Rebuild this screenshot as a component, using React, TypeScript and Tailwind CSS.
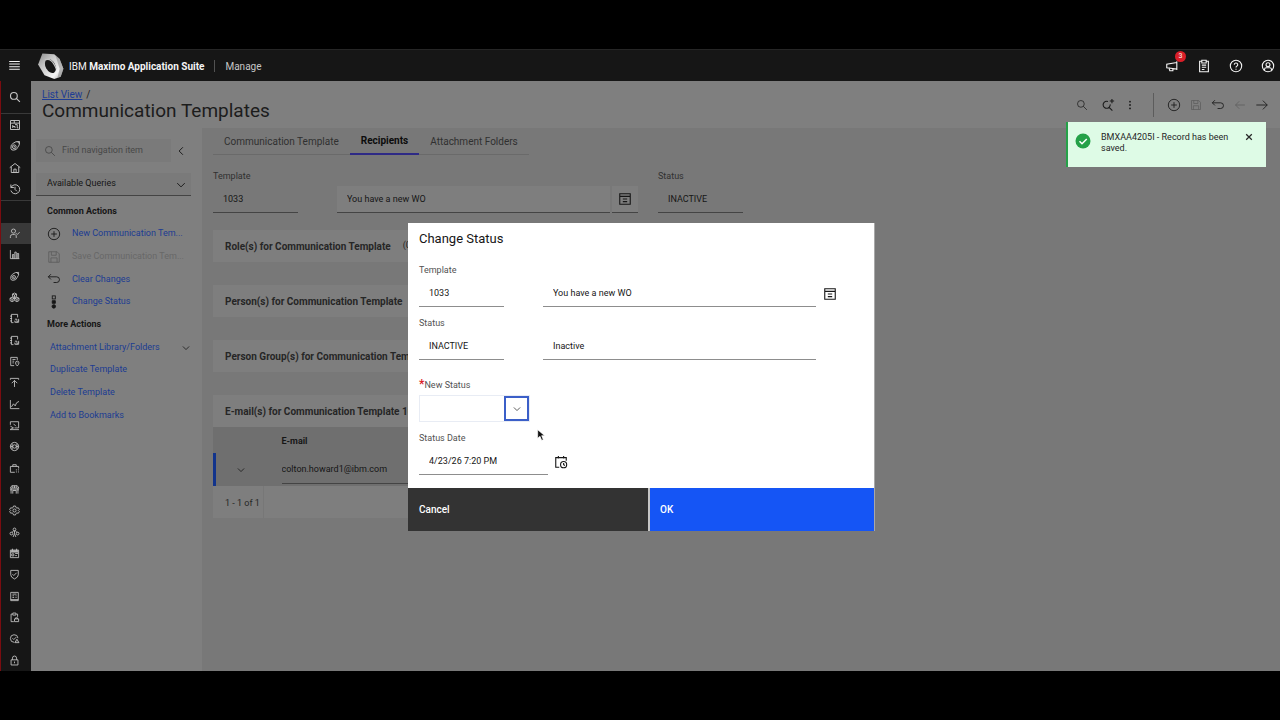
import type { ReactNode } from "react";

const glyphs: Record<string, ReactNode> = {
  menu: <path d="M3 6h26M3 12.500h26M3 19h26M3 25.500h26" />,
  search: <path d="M13 4a9 9 0 1 0 0 18a9 9 0 0 0 0-18zM19.500 19.500L29 29" />,
  searchPlus: <path d="M16 8.200A8 8 0 1 0 20.500 18A8 8 0 0 0 21 14.500M18 21l8 8M25 2v10M20 7h10" />,
  overflow: (
    <g fill="currentColor" stroke="none">
      <circle cx="16" cy="7" r="2.500" />
      <circle cx="16" cy="16" r="2.500" />
      <circle cx="16" cy="25" r="2.500" />
    </g>
  ),
  add: <path d="M16 3a13 13 0 1 0 0 26a13 13 0 0 0 0-26zM16 9.500v13M9.500 16h13" />,
  save: <path d="M4 4h19l5 5v19H4zM10 4v8h11V4M9 28V18h14v10" />,
  undo: <path d="M9 5L3 11l6 6M3 11h19a6.500 6.500 0 0 1 0 13H15" />,
  left: <path d="M14 6L4 16l10 10M4 16h25" />,
  right: <path d="M18 6l10 10L18 26M28 16H3" />,
  chevronDown: <path d="M6 11l10 10l10-10" />,
  chevronLeft: <path d="M21 6L11 16l10 10" />,
  close: <path d="M7 7l18 18M25 7L7 25" />,
  status: (
    <>
      <rect x="12" y="2" width="7" height="7" />
      <path d="M12 13h7v6h-7z" fill="currentColor" />
      <circle cx="15.500" cy="26" r="4" fill="currentColor" />
    </>
  ),
  megaphone: <path d="M27 5v20M27 8L4 12v8l23 3M9 20l2 7h7v-5" />,
  clipboard: <path d="M10 5H6v24h20V5h-4M11 3h10v6H11zM11 14h10M11 19h10M11 24h6" />,
  help: (
    <>
      <circle cx="16" cy="16" r="13" />
      <path d="M12 13a4 4 0 1 1 5.500 3.700Q16 17.500 16 19.500M16 22v2.500" />
    </>
  ),
  user: (
    <>
      <circle cx="16" cy="16" r="13" />
      <circle cx="16" cy="13" r="4.500" />
      <path d="M8 26v-2a4 4 0 0 1 4-4h8a4 4 0 0 1 4 4v2" />
    </>
  ),
  dashboard: <path d="M4 4h24v24H4zM4 11h24M14 4v7M10 16v8M10 20h6v4M16 15h6v4M22 19v5M22 24h3" />,
  rocket: (
    <>
      <path d="M28 4Q17 3 11 9Q4 12 5 22Q6 28 12 27Q21 27 23 20Q29 14 28 4zM22 4l6 6" />
      <circle cx="14" cy="18" r="5" />
      <circle cx="14" cy="18" r="1" />
    </>
  ),
  home: <path d="M2 15L16 4l14 11M6 13v15h20V13M13 28v-9h6v9" />,
  history: <path d="M5 4v8h8M5.500 12A12 12 0 1 1 5 20M16 10v7l5 5" />,
  userCheck: (
    <>
      <circle cx="13" cy="9" r="6" />
      <path d="M4 29v-4a6 6 0 0 1 6-6h6a6 6 0 0 1 5 3v7M20 15l4 4l7-7" />
    </>
  ),
  bars: <path d="M4 3v25h26M10 28V16h4v12M17 28V9h4v19M24 28V13h4v15" />,
  cubes: (
    <path d="M16 3l6 3v7l-6 3l-6-3V6zM9 15l6 3v7l-6 3l-6-3v-7zM23 15l6 3v7l-6 3l-6-3v-7zM10 6l6 3l6-3M16 9v7M3 18l6 3l6-3l2 0l6 3l6-3M9 21v7M23 21v7" />
  ),
  notebook: (
    <>
      <path d="M13 28H7V4h18v9M3 9h6M3 16h6M3 23h6" />
      <path d="M17 18h6v5M28 17v10H17v-5M20 24l3 3l5-5" />
    </>
  ),
  docPin: <path d="M15 28H5V4h19v8M10 10h9M10 15h5M10 20h4M24 15a5 5 0 0 1 5 5q0 4-5 9q-5-5-5-9a5 5 0 0 1 5-5zM24 19v2" />,
  upload: <path d="M4 8V4h24v4M16 10v19M8 18l8-8l8 8" />,
  chart: <path d="M4 3v25h26M7 23l6-9l5 6l4-9l7-4" />,
  screen: <path d="M4 14V5h24v18H16M4 18l9 5l-9 4M3 28h26M13 11l7 7" />,
  globe: (
    <>
      <circle cx="16" cy="16" r="12" />
      <circle cx="16" cy="16" r="5" />
      <path d="M9 7v18M23 7v18M4 16h7M21 16h7" />
    </>
  ),
  briefcase: <path d="M17 27H4V10h24v6M11 10V5h10v5M20 20h3M26 20h3M20 26h3M26 26h3" />,
  building: <path d="M4 12l4-7h16l5 7zM6 12v16M26 12v16M11 28v-9h10v9M3 17h26M11 5v7M16 5v7M21 5v7" />,
  gear: (
    <>
      <path d="M13 3h6l1 4l3 2l4-1l3 5l-3 3l3 3l-3 5l-4-1l-3 2l-1 4h-6l-1-4l-3-2l-4 1l-3-5l3-3l-3-3l3-5l4 1l3-2z" />
      <circle cx="16" cy="16" r="4.500" />
    </>
  ),
  network: (
    <>
      <circle cx="16" cy="7" r="4" />
      <circle cx="7" cy="19" r="4" />
      <circle cx="25" cy="19" r="4" />
      <path d="M16 11v8M14 10l-5 6M18 10l5 6M12 29l4-10l4 10" />
    </>
  ),
  calendar: <path d="M4 6h24v22H4zM4 12h24M10 2v6M22 2v6M8 17h6v6H8zM18 16h8M18 22h5M6 8h20M6 10h20" />,
  shield: <path d="M5 4h22v13q0 7-11 12Q5 24 5 17zM10 15l4 4l8-8" />,
  receipt: <path d="M5 4h22v24H5zM10 9h12M10 14h5M19 14h3M10 19h5M19 19h3M5 25h22" />,
  clipLock: <path d="M14 28H6V6h4M11 3h9v6h-9zM21 6h4v8M16 20h12v8H16zM19 20v-3h6v3" />,
  checkWarn: <path d="M15 27A11 11 0 1 1 26 15M10 15l4 4l7-7M23 18l6 10H17zM23 22v3" />,
  lock: <path d="M6 14h20v15H6zM10 14V9a6 6 0 0 1 12 0v5M16 19v5" />,
  detail: <path d="M4 4h24v24H4zM4 10h24M11 16h10M11 22h10" />,
  dateTime: (
    <>
      <path d="M12 28H4V6h24v7M10 2v6M22 2v6" />
      <circle cx="22" cy="22" r="7" />
      <path d="M22 18v4l3 2" />
    </>
  ),
};

function Icon({ name, className = "size-3", weight = 2.5 }: { name: string; className?: string; weight?: number }) {
  return (
    <svg viewBox="0 0 32 32" className={`shrink-0 ${className}`} fill="none" stroke="currentColor" strokeWidth={weight} aria-hidden="true">
      {glyphs[name]}
    </svg>
  );
}

const pinned = [
  { icon: "dashboard", label: "Dashboard" },
  { icon: "rocket", label: "Get started" },
  { icon: "home", label: "Home" },
  { icon: "history", label: "Recent" },
];

const modules = [
  { icon: "userCheck", label: "Administration" },
  { icon: "bars", label: "Analytics" },
  { icon: "rocket", label: "Launch" },
  { icon: "cubes", label: "Assets" },
  { icon: "notebook", label: "Plans" },
  { icon: "notebook", label: "Changes" },
  { icon: "docPin", label: "Contracts" },
  { icon: "upload", label: "Deployed assets" },
  { icon: "chart", label: "Financial" },
  { icon: "screen", label: "Integration" },
  { icon: "globe", label: "Inventory" },
  { icon: "briefcase", label: "Purchasing" },
  { icon: "building", label: "Facilities" },
  { icon: "gear", label: "System configuration" },
  { icon: "network", label: "Platform" },
  { icon: "calendar", label: "Preventive maintenance" },
  { icon: "shield", label: "Safety" },
  { icon: "receipt", label: "Service desk" },
  { icon: "clipLock", label: "Self service" },
  { icon: "checkWarn", label: "Work orders" },
  { icon: "lock", label: "Security" },
];

const commonActions = [
  { icon: "add", label: "New Communication Tem...", disabled: false },
  { icon: "save", label: "Save Communication Tem...", disabled: true },
  { icon: "undo", label: "Clear Changes", disabled: false },
  { icon: "status", label: "Change Status", disabled: false },
];

const sections = [
  { title: "Role(s) for Communication Template", count: "(0" },
  { title: "Person(s) for Communication Template", count: "" },
  { title: "Person Group(s) for Communication Template", count: "" },
];

function TopBar() {
  return (
    <header className="flex h-8 shrink-0 items-center border-t border-[#262626] bg-[#161616] text-[#f4f4f4]">
      <button aria-label="Menu" className="flex w-[31px] justify-center pr-0.5">
        <Icon name="menu" className="size-[13px]" />
      </button>
      <svg viewBox="0 0 52 52" className="ml-1.5 size-7" aria-hidden="true">
        <defs>
          <linearGradient id="nut" x1="0" y1="0" x2="1" y2="1">
            <stop offset="0" stopColor="#8d8d8d" />
            <stop offset="0.35" stopColor="#c6c6c6" />
            <stop offset="0.75" stopColor="#f4f4f4" />
            <stop offset="1" stopColor="#a8a8a8" />
          </linearGradient>
        </defs>
        <path d="M10 3L32 4L42 13L49 31L44 46L32 50L14 43L2 23Z" fill="url(#nut)" />
        <path d="M34 5L42 13L49 31L44 46L38 48L42 31Z" fill="#8d8d8d" opacity="0.6" />
        <ellipse cx="25" cy="26" rx="9" ry="14" fill="#161616" transform="rotate(-28 25 26)" />
        <path d="M15 15Q27 9 36 32" fill="none" stroke="#c6c6c6" strokeWidth="2" />
      </svg>
      <p className="ml-1 pt-0.5 text-[10px]">
        IBM <span className="font-bold">Maximo Application Suite</span>
      </p>
      <span className="mx-2.5 h-3 w-px bg-[#525252]" />
      <span className="pt-0.5 text-[10px] text-[#c6c6c6]">Manage</span>
      <div className="ml-auto flex items-center gap-[18px] pr-[5px]">
        <button aria-label="Announcements" className="relative">
          <Icon name="megaphone" className="size-3.5" />
          <span className="absolute -top-2 left-2.5 flex size-[11px] items-center justify-center rounded-full bg-[#da1e28] text-[7px]">3</span>
        </button>
        <button aria-label="Tasks"><Icon name="clipboard" className="size-3.5" /></button>
        <button aria-label="Help"><Icon name="help" className="size-3.5" /></button>
        <button aria-label="Account"><Icon name="user" className="size-3.5" /></button>
      </div>
    </header>
  );
}

function Rail() {
  return (
    <nav aria-label="Modules" className="flex w-[31px] shrink-0 flex-col border-l border-[#7a0c10] bg-[#161616] text-[#c6c6c6]">
      <button aria-label="Search" className="flex h-[33px] items-center justify-center border-b border-[#393939] pr-[3px]">
        <Icon name="search" weight={3} />
      </button>
      <div className="flex h-[87px] flex-col border-b border-[#393939]">
        {pinned.map((item) => (
          <button key={item.label} aria-label={item.label} className="flex flex-1 items-center justify-center pr-[3px]">
            <Icon name={item.icon} />
          </button>
        ))}
      </div>
      <div className="flex min-h-0 flex-1 flex-col pt-[22px]">
        {modules.map((item, index) => (
          <button
            key={item.label}
            aria-label={item.label}
            className={`flex min-h-0 flex-1 items-center justify-center pr-[3px] ${index === 0 ? "bg-[#393939]" : ""}`}
          >
            <Icon name={item.icon} className="size-[11px]" />
          </button>
        ))}
      </div>
    </nav>
  );
}

function PageHeader() {
  return (
    <div className="flex h-[47px] shrink-0 items-center bg-[#7f7f7f] pr-[11px] pl-[11px] text-[#1c1c1c]">
      <div>
        <p className="text-[10px] leading-3">
          <a href="#list" className="text-[#1d3c94] underline">List View</a>
          <span className="ml-1">/</span>
        </p>
        <h1 className="text-[19px] leading-5">Communication Templates</h1>
      </div>
      <div className="ml-auto flex items-center gap-[9px]">
        <button aria-label="Search records" className="mr-1"><Icon name="search" weight={2} /></button>
        <button aria-label="Advanced search"><Icon name="searchPlus" className="size-3.5" /></button>
        <button aria-label="More options"><Icon name="overflow" /></button>
        <span className="mr-1 ml-2 h-6 w-px bg-[#5c5c5c]" />
        <button aria-label="New"><Icon name="add" className="size-3.5" weight={2} /></button>
        <button aria-label="Save" disabled className="text-[#5c5c5c]"><Icon name="save" weight={2} /></button>
        <button aria-label="Undo"><Icon name="undo" className="size-3.5" weight={2} /></button>
        <button aria-label="Previous" disabled className="text-[#5c5c5c]"><Icon name="left" weight={2} /></button>
        <button aria-label="Next"><Icon name="right" className="size-3.5" weight={2} /></button>
      </div>
    </div>
  );
}

function ActionsPanel() {
  return (
    <aside className="w-[171px] shrink-0 bg-[#7f7f7f] pt-[11px] text-[9px] text-[#161616]">
      <div className="flex items-center pl-[5px]">
        <label className="flex h-[23px] w-[135px] items-center gap-1.5 bg-[#7a7a7a] pl-2 text-[#404040]">
          <Icon name="search" weight={2} />
          <input aria-label="Find navigation item" placeholder="Find navigation item" className="min-w-0 flex-1 outline-none placeholder:text-[#484848]" />
        </label>
        <button aria-label="Collapse" className="ml-1"><Icon name="chevronLeft" /></button>
      </div>
      <div className="relative mt-[11px] mr-[11px] ml-[5px]">
        <select aria-label="Available Queries" className="h-[23px] w-full appearance-none rounded-none border-b border-[#444444] bg-[#7a7a7a] px-[11px]">
          <option>Available Queries</option>
        </select>
        <Icon name="chevronDown" className="absolute top-1.5 right-1 size-3" />
      </div>
      <div className="mt-1 grid h-[227px] auto-rows-fr items-center pl-4">
        <h2 className="font-bold">Common Actions</h2>
        {commonActions.map((action) => (
          <button
            key={action.label}
            disabled={action.disabled}
            className={`flex items-center gap-[11px] text-left whitespace-nowrap ${action.disabled ? "text-[#686868]" : "text-[#1c3c92]"}`}
          >
            <Icon name={action.icon} weight={2} className={`size-3.5 ${action.disabled ? "text-[#5e5e5e]" : "text-[#161616]"}`} />
            {action.label}
          </button>
        ))}
        <h2 className="font-bold">More Actions</h2>
        <button className="flex items-center justify-between pr-[11px] pl-[3px] text-[#1c3c92]">
          Attachment Library/Folders
          <Icon name="chevronDown" className="size-2.5 text-[#161616]" />
        </button>
        <button className="pl-[3px] text-left text-[#1c3c92]">Duplicate Template</button>
        <button className="pl-[3px] text-left text-[#1c3c92]">Delete Template</button>
        <button className="pl-[3px] text-left text-[#1c3c92]">Add to Bookmarks</button>
      </div>
    </aside>
  );
}

function Recipients() {
  return (
    <main className="min-w-0 flex-1 bg-[#787878] pl-[11px] text-[9px] text-[#161616]">
      <div role="tablist" className="flex h-[27px] w-fit text-[10px] text-[#303030]">
        <button role="tab" className="border-b border-[#6a6a6a] px-[11px]">Communication Template</button>
        <button role="tab" aria-selected="true" className="border-b-2 border-[#2e2a86] px-[11px] font-bold text-[#0c0c0c]">Recipients</button>
        <button role="tab" className="border-b border-[#6a6a6a] px-[11px]">Attachment Folders</button>
      </div>
      <div className="mt-3.5 flex items-end">
        <div className="w-[85px]">
          <label htmlFor="template" className="block leading-[14px] text-[#303030]">Template</label>
          <input id="template" readOnly value="1033" className="mt-[3px] h-[27px] w-full border-b border-[#444444] px-2.5 outline-none" />
        </div>
        <input aria-label="Description" defaultValue="You have a new WO" className="ml-[39px] h-[27px] w-[273px] border-b border-[#444444] bg-[#7e7e7e] px-2.5 outline-none" />
        <button aria-label="Long description" className="ml-0.5 flex h-[27px] w-[26px] items-center justify-center border-b border-[#444444] bg-[#7e7e7e]">
          <Icon name="detail" className="size-3.5" />
        </button>
        <div className="ml-5 w-[85px]">
          <label htmlFor="status" className="block leading-[14px] text-[#303030]">Status</label>
          <input id="status" readOnly value="INACTIVE" className="mt-[3px] h-[27px] w-full border-b border-[#444444] px-2.5 outline-none" />
        </div>
      </div>
      <div className="mt-[17px] w-3/5 text-[#262626]">
        {sections.map((section) => (
          <section key={section.title} className="mb-[23px] flex h-8 items-center gap-3 bg-[#7e7e7e] px-3">
            <h2 className="text-[10px] font-bold">{section.title}</h2>
            <span>{section.count}</span>
          </section>
        ))}
        <section className="bg-[#7e7e7e]">
          <h2 className="flex h-8 items-center px-3 text-[10px] font-bold">E-mail(s) for Communication Template 1033</h2>
          <table className="w-full bg-[#6f6f6f] text-left text-[#161616]">
            <thead>
              <tr className="h-[26px]">
                <th className="w-[67px]" aria-label="Expand" />
                <th className="pt-1 font-bold">E-mail</th>
              </tr>
            </thead>
            <tbody>
              <tr className="h-[33px]">
                <td className="border-l-3 border-[#12348c] pl-5">
                  <button aria-label="Show details" className="block"><Icon name="chevronDown" className="size-2.5" /></button>
                </td>
                <td className="p-0">
                  <input aria-label="E-mail" defaultValue="colton.howard1@ibm.com" className="h-7 w-full border-b border-[#444444] outline-none" />
                </td>
              </tr>
            </tbody>
          </table>
          <p className="flex h-8 items-center">
            <span className="flex h-8 w-[51px] items-center border-r border-[#777777] pt-1 pl-3 whitespace-nowrap">1 - 1 of 1</span>
          </p>
        </section>
      </div>
    </main>
  );
}

function ChangeStatusDialog() {
  return (
    <div role="dialog" aria-labelledby="dialog-title" className="w-[467px] border-r border-[#a8a8a8] bg-white text-[9px] text-[#161616]">
      <div className="px-[11px] pt-2 pb-[13px]">
        <h2 id="dialog-title" className="text-[13px] leading-4">Change Status</h2>
        <div className="mt-4 flex items-end">
          <div className="w-[85px]">
            <label htmlFor="dlg-template" className="block leading-[14px] text-[#525252]">Template</label>
            <input id="dlg-template" readOnly value="1033" className="mt-[3px] h-[27px] w-full border-b border-[#8d8d8d] px-2.5 outline-none" />
          </div>
          <input aria-label="Template description" readOnly value="You have a new WO" className="ml-[39px] h-[27px] w-[273px] border-b border-[#8d8d8d] px-2.5 outline-none" />
          <button aria-label="Template long description" className="ml-[7px] flex h-[27px] items-center"><Icon name="detail" className="size-3.5" /></button>
        </div>
        <div className="mt-[9px] flex items-end">
          <div className="w-[85px]">
            <label htmlFor="dlg-status" className="block leading-[14px] text-[#525252]">Status</label>
            <input id="dlg-status" readOnly value="INACTIVE" className="mt-[3px] h-[27px] w-full border-b border-[#8d8d8d] px-2.5 outline-none" />
          </div>
          <input aria-label="Status description" readOnly value="Inactive" className="ml-[39px] h-[27px] w-[273px] border-b border-[#8d8d8d] px-2.5 outline-none" />
        </div>
        <label htmlFor="new-status" className="mt-[18px] block leading-[14px] text-[#525252]">
          <span className="text-xs leading-3 font-bold text-[#da1e28]">*</span>New Status
        </label>
        <div className="mt-[3px] flex h-[27px] w-[111px] items-center border border-[#e8ecf4]">
          <input id="new-status" className="min-w-0 flex-1 px-2.5 outline-none" />
          <button aria-label="Select new status" className="flex size-[25px] items-center justify-center border-2 border-[#3b5fc8] text-[#525252]">
            <Icon name="chevronDown" className="size-2.5" weight={3} />
          </button>
        </div>
        <label htmlFor="status-date" className="mt-[9px] block leading-[14px] text-[#525252]">Status Date</label>
        <div className="mt-[3px] flex items-center">
          <input id="status-date" defaultValue="4/23/26 7:20 PM" className="h-[27px] w-[129px] border-b border-[#8d8d8d] px-2.5 outline-none" />
          <button aria-label="Pick date and time" className="ml-1.5"><Icon name="dateTime" className="size-3.5" /></button>
        </div>
      </div>
      <div className="flex h-[43px] gap-0.5 bg-[#c6c6c6] text-[10px] text-white">
        <button className="w-60 bg-[#333333] pl-[11px] text-left font-medium">Cancel</button>
        <button className="flex-1 bg-[#1555f5] pl-2.5 text-left font-medium">OK</button>
      </div>
    </div>
  );
}

function SavedToast() {
  return (
    <div role="status" className="flex w-[200px] items-start border-l-2 border-[#24a148] bg-[#defbe6] py-2.5 pr-3 pl-[7px] text-[9px] leading-[11px] text-[#262626]">
      <svg viewBox="0 0 32 32" className="mt-px size-4 shrink-0" aria-hidden="true">
        <circle cx="16" cy="16" r="15" fill="#24a148" />
        <path d="M9 16.500l5 5l9.500-9.500" fill="none" stroke="#fff" strokeWidth="3" />
      </svg>
      <p className="mr-1 ml-2.5 h-[25px] flex-1">BMXAA4205I - Record has been saved.</p>
      <button aria-label="Dismiss"><Icon name="close" className="size-2.5" weight={4} /></button>
    </div>
  );
}

export default function App() {
  return (
    <div className="flex h-screen flex-col overflow-hidden bg-black py-[49px] font-['Roboto','Liberation_Sans',sans-serif]">
      <TopBar />
      <div className="relative flex min-h-0 flex-1">
        <Rail />
        <div className="flex min-w-0 flex-1 flex-col">
          <PageHeader />
          <div className="flex min-h-0 flex-1">
            <ActionsPanel />
            <Recipients />
          </div>
        </div>
        <div className="pointer-events-none absolute inset-0 flex items-center justify-center pt-0.5 pl-[3px]">
          <div className="pointer-events-auto">
            <ChangeStatusDialog />
          </div>
        </div>
        <div className="absolute top-[41px] right-3.5">
          <SavedToast />
        </div>
        <svg viewBox="0 0 12 18" className="absolute top-[348px] left-[537px] h-3 w-2" aria-hidden="true">
          <path d="M1 1v13l3.500-3l2.500 6l2.500-1l-2.500-6h4.500z" fill="#111" stroke="#fff" strokeWidth="1" />
        </svg>
      </div>
    </div>
  );
}
